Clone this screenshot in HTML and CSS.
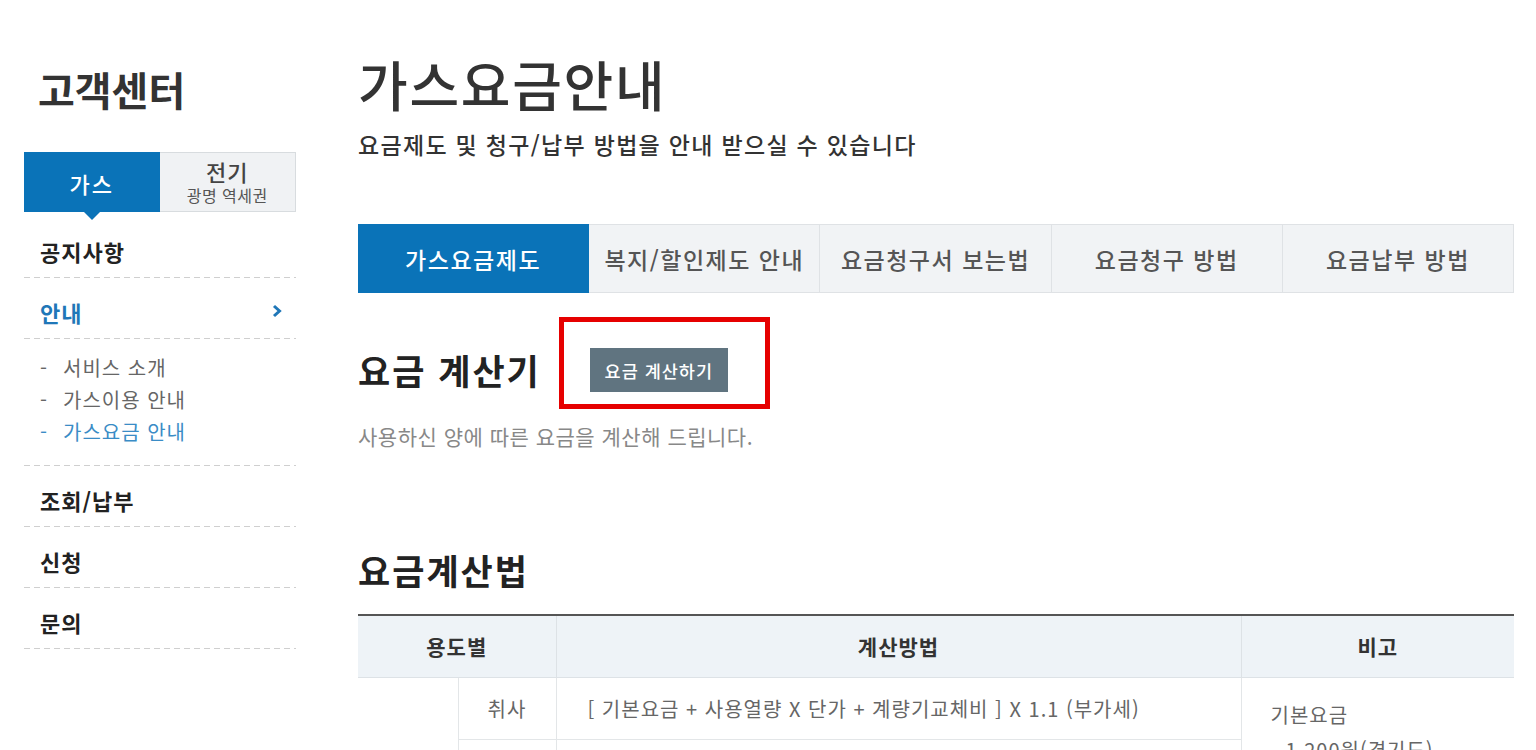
FILE: index.html
```html
<!DOCTYPE html>
<html lang="ko">
<head>
<meta charset="utf-8">
<title>가스요금안내</title>
<link rel="stylesheet" href="styles.css">
</head>
<body>
<div class="wrap">
  <aside class="side">
    <h2 class="side-title">고객센터</h2>
    <div class="side-tabs">
      <a class="side-tab on">가스</a>
      <a class="side-tab">
        <span class="st-main">전기</span>
        <span class="st-sub">광명 역세권</span>
      </a>
    </div>
    <ul class="menu">
      <li class="menu-item"><a>공지사항</a></li>
      <li class="menu-item active">
        <a>안내</a>
        <svg class="chev" width="10" height="14" viewBox="0 0 10 14"><polyline points="2,2 7.5,7 2,12" fill="none" stroke="#1f77b8" stroke-width="3"/></svg>
      </li>
      <li class="submenu">
        <a class="sub"><span class="dash">-</span>서비스 소개</a>
        <a class="sub"><span class="dash">-</span>가스이용 안내</a>
        <a class="sub on"><span class="dash">-</span>가스요금 안내</a>
      </li>
      <li class="menu-item"><a>조회/납부</a></li>
      <li class="menu-item"><a>신청</a></li>
      <li class="menu-item"><a>문의</a></li>
    </ul>
  </aside>
  <main class="main">
    <h1 class="page-title">가스요금안내</h1>
    <p class="page-sub">요금제도 및 청구/납부 방법을 안내 받으실 수 있습니다</p>
    <nav class="tabs">
      <a class="tab on">가스요금제도</a>
      <a class="tab">복지/할인제도 안내</a>
      <a class="tab">요금청구서 보는법</a>
      <a class="tab">요금청구 방법</a>
      <a class="tab">요금납부 방법</a>
    </nav>
    <div class="calc-row">
      <h3 class="sec-title">요금 계산기</h3>
      <span class="btn-wrap">
        <a class="btn">요금 계산하기</a>
        <span class="mark"></span>
      </span>
    </div>
    <p class="desc">사용하신 양에 따른 요금을 계산해 드립니다.</p>
    <h3 class="sec-title sec2">요금계산법</h3>
    <table class="tbl">
      <colgroup>
        <col style="width:100px"><col style="width:98px"><col style="width:685px"><col style="width:273px">
      </colgroup>
      <thead>
        <tr><th colspan="2">용도별</th><th>계산방법</th><th>비고</th></tr>
      </thead>
      <tbody>
        <tr>
          <td rowspan="3" class="c-group"></td>
          <td class="c-use">취사</td>
          <td class="c-calc">[ 기본요금 + 사용열량 X 단가 + 계량기교체비 ] X 1.1 (부가세)</td>
          <td rowspan="3" class="c-note">
            <div>기본요금</div>
            <div class="ind">1,200원(경기도)</div>
          </td>
        </tr>
        <tr>
          <td class="c-use">난방</td>
          <td class="c-calc">[ 기본요금 + 사용열량 X 단가 + 계량기교체비 ] X 1.1 (부가세)</td>
        </tr>
        <tr>
          <td class="c-use">업무</td>
          <td class="c-calc">[ 기본요금 + 사용열량 X 단가 + 계량기교체비 ] X 1.1 (부가세)</td>
        </tr>
      </tbody>
    </table>
  </main>
</div>
</body>
</html>
```

FILE: styles.css
```css
* { box-sizing: border-box; }
html, body { margin: 0; padding: 0; background: #fff; }
body {
  font-family: "Noto Sans CJK KR", "Noto Sans", sans-serif;
  color: #333;
  overflow: hidden;
}
a { text-decoration: none; color: inherit; }
ul { list-style: none; margin: 0; padding: 0; }

.wrap {
  display: flex;
  padding-left: 24px;
  gap: 62px;
}

/* sidebar */
.side {
  width: 272px;
  flex: none;
  padding-top: 65px;
}
.side-title {
  margin: 0 0 0 14px;
  font-size: 40px;
  line-height: 48px;
  font-weight: 700;
  color: #333;
}
.side-tabs {
  display: flex;
  margin-top: 39px;
  height: 60px;
}
.side-tab {
  flex: 1 1 0;
  display: flex;
  flex-direction: column;
  align-items: center;
  justify-content: center;
  gap: 2px;
  background: #f0f2f4;
  border: 1px solid #d8dcdf;
  border-left: 0;
  color: #444;
  position: relative;
}
.side-tab.on {
  background: #0a73b8;
  border: 0;
  color: #fff;
  font-size: 22px;
  letter-spacing: 2px;
  font-weight: 500;
  padding-top: 2px;
}
.side-tab.on::after {
  content: "";
  position: absolute;
  left: 50%;
  bottom: -8px;
  margin-left: -8px;
  border-left: 8px solid transparent;
  border-right: 8px solid transparent;
  border-top: 8px solid #0a73b8;
}
.st-main { font-size: 22px; line-height: 24px; font-weight: 500; letter-spacing: 1px; }
.st-sub { font-size: 16px; line-height: 20px; color: #555; letter-spacing: 0.5px; }

.menu { margin-top: 5px; }
.menu-item {
  display: flex;
  align-items: center;
  justify-content: space-between;
  padding: 19px 14px 12px 16px;
  line-height: 30px;
  font-size: 22px;
  letter-spacing: 1px;
  font-weight: 700;
  color: #222;
  background: repeating-linear-gradient(90deg, #cfcfcf 0 6px, transparent 6px 10px) left bottom / 100% 1px no-repeat;
}
.menu-item.active { color: #1f77b8; }
.chev { display: block; margin-top: -2px; }
.submenu {
  padding: 13px 0 18px 16px;
  display: flex;
  flex-direction: column;
  background: repeating-linear-gradient(90deg, #cfcfcf 0 6px, transparent 6px 10px) left bottom / 100% 1px no-repeat;
}
.sub {
  font-size: 20px;
  letter-spacing: 1px;
  line-height: 32px;
  color: #666;
  display: flex;
}
.dash { width: 23px; flex: none; }
.sub.on { color: #3a8cc6; }

/* main */
.main {
  width: 1156px;
  flex: none;
  padding-top: 52px;
}
.page-title {
  margin: 0;
  font-size: 54px;
  letter-spacing: 1.7px;
  line-height: 64px;
  font-weight: 500;
  color: #333;
}
.page-sub {
  margin: 12px 0 0;
  font-size: 23px;
  letter-spacing: 1.3px;
  line-height: 32px;
  font-weight: 500;
  color: #333;
}
.tabs {
  display: flex;
  margin-top: 64px;
  height: 69px;
}
.tab {
  flex: 1 1 0;
  display: flex;
  align-items: center;
  justify-content: center;
  background: #f1f3f5;
  border: 1px solid #dfe2e5;
  border-left: 0;
  font-size: 23px;
  letter-spacing: 1.5px;
  font-weight: 500;
  color: #555;
}
.tab.on {
  background: #0a73b8;
  border-color: #0a73b8;
  color: #fff;
}

.calc-row {
  display: flex;
  align-items: center;
  gap: 49px;
  margin-top: 55px;
  height: 44px;
}
.sec-title {
  margin: 0;
  font-size: 35px;
  letter-spacing: 2px;
  line-height: 44px;
  font-weight: 700;
  color: #222;
}
.btn-wrap { position: relative; display: block; }
.btn {
  display: flex;
  align-items: center;
  justify-content: center;
  width: 138px;
  height: 44px;
  background: #607480;
  color: #fff;
  font-size: 17.5px;
  letter-spacing: 1px;
  font-weight: 500;
}
.mark {
  position: absolute;
  left: -31px;
  top: -31px;
  right: -42px;
  bottom: -17px;
  border: 5px solid #e60000;
}
.desc {
  margin: 29px 0 0;
  font-size: 21px;
  letter-spacing: 0.5px;
  line-height: 30px;
  color: #888;
}
.sec2 { margin-top: 97px; }

.tbl {
  margin-top: 22px;
  width: 1156px;
  border-collapse: collapse;
  table-layout: fixed;
  border-top: 2px solid #555;
}
.tbl th {
  height: 62px;
  background: #eef3f7;
  font-size: 21px;
  letter-spacing: 1px;
  font-weight: 700;
  color: #333;
  border-left: 1px solid #dde2e6;
  border-bottom: 1px solid #dde2e6;
  padding: 0;
}
.tbl th:first-child { border-left: 0; }
.tbl td {
  height: 62px;
  border-left: 1px solid #e3e6e8;
  border-bottom: 1px solid #e3e6e8;
  font-size: 20px;
  letter-spacing: 1px;
  color: #666;
  padding: 0;
}
.tbl td.c-group { border-left: 0; }
.c-use { text-align: center; color: #777; }
.c-calc { padding-left: 31px !important; }
.c-note {
  vertical-align: top;
  padding: 19px 0 0 29px !important;
  line-height: 35px;
}
.c-note .ind { padding-left: 15px; }
```
